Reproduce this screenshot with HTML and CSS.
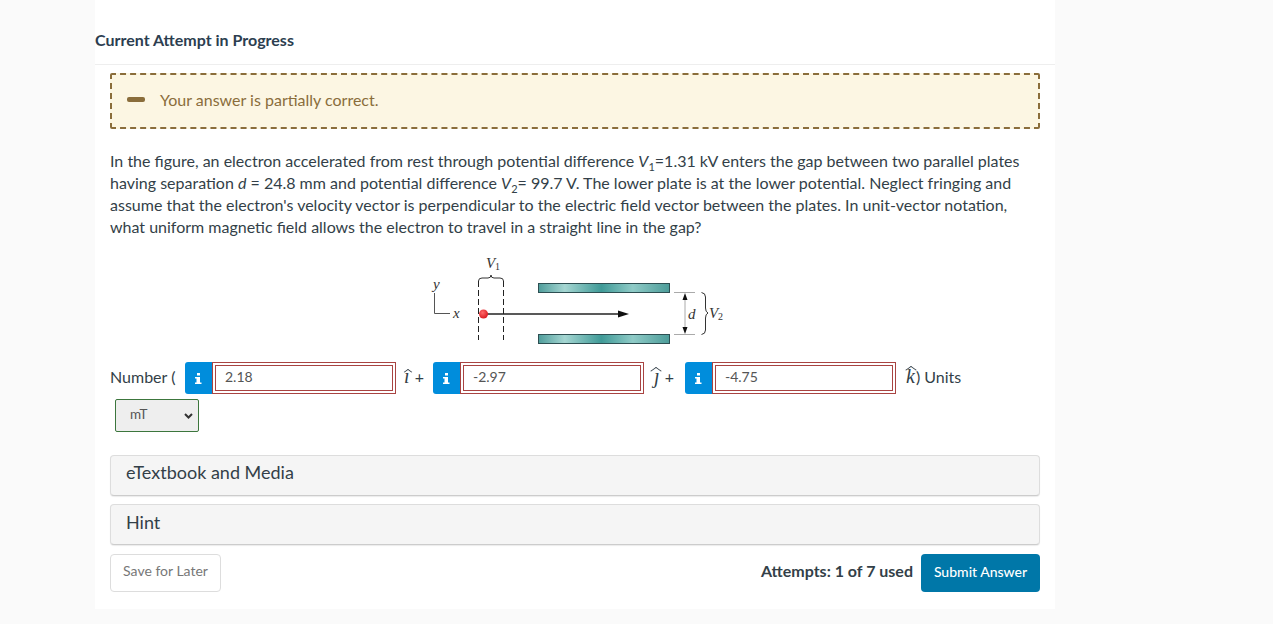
FILE: index.html
```html
<!DOCTYPE html>
<html lang="en">

<head>
	<meta charset="UTF-8">
	<meta name="viewport" content="width=device-width, initial-scale=1.0">
	<title>Current Attempt in Progress</title>
	<link rel="stylesheet" href="styles.css">
</head>

<body>
	<div class="card">
		<h1 class="title">Current Attempt in Progress</h1>
		<div class="content">
			<div class="banner">
				<span class="banner-icon"></span>
				<span>Your answer is partially correct.</span>
			</div>
			<p class="question">In the figure, an electron accelerated from rest through potential difference <i>V</i><sub>1</sub>=1.31 kV enters the gap between two parallel plates having separation <i>d</i> = 24.8 mm and potential difference <i>V</i><sub>2</sub>= 99.7 V. The lower plate is at the lower potential. Neglect fringing and assume that the electron's velocity vector is perpendicular to the electric field vector between the plates. In unit-vector notation, what uniform magnetic field allows the electron to travel in a straight line in the gap?</p>
			<svg class="figure" width="310" height="100" viewBox="0 0 310 100">
				<defs>
					<linearGradient id="plate" x1="0" x2="1" y1="0" y2="0">
						<stop offset="0" stop-color="#4f9d9b" />
						<stop offset="0.2" stop-color="#a5d6d2" />
						<stop offset="0.48" stop-color="#3f9a97" />
						<stop offset="0.72" stop-color="#8fcbc7" />
						<stop offset="1" stop-color="#4c9c99" />
					</linearGradient>
					<radialGradient id="dot" cx="0.4" cy="0.35" r="0.7">
						<stop offset="0" stop-color="#ff6a6a" />
						<stop offset="1" stop-color="#d8141c" />
					</radialGradient>
				</defs>
				<rect class="plate" x="118.5" y="33.5" width="131" height="9" />
				<rect class="plate" x="118.5" y="84.5" width="131" height="9" />
				<path class="axis" d="M14.5 43V63.5H30" />
				<path class="dash" d="M58.5 31V90M83.5 31V90" />
				<path class="thin" d="M58.5 31Q58.5 28 62 28H68Q71 28 71 25Q71 28 74 28H80Q83.5 28 83.5 31" />
				<path class="line" d="M63 64H200" />
				<path class="head" d="M198 60.5L209 64L198 67.5Z" />
				<circle cx="63.5" cy="64" r="4.5" fill="url(#dot)" />
				<path class="grey" d="M254 42.5H275M254 84.5H275" />
				<path class="grey" d="M265 46V81" />
				<path class="head" d="M265 43L262.5 50H267.5ZM265 84L262.5 77H267.5Z" />
				<path class="thin" d="M281.5 42.5Q285.5 43 285.5 47V58Q285.5 62 288 63Q285.5 64 285.5 68V80Q285.5 84 281.5 84.5" />
				<text class="math" x="66" y="18">V</text>
				<text class="math-sub" x="75" y="20">1</text>
				<text class="math" x="13" y="39">y</text>
				<text class="math" x="33" y="68">x</text>
				<text class="math" x="268" y="69">d</text>
				<text class="math" x="289" y="68">V</text>
				<text class="math-sub" x="298" y="70">2</text>
			</svg>
			<div class="answer">
				<span class="label">Number (</span>
				<span class="info"><svg width="7" height="11" viewBox="0 0 7 11"><path d="M2 0H5V2.5H2ZM0 4H5V9.5H6.5V11H0V9.5H1.5V5.5H0Z" /></svg></span>
				<span class="field"><input class="field-input" type="text" value="2.18"></span>
				<span class="unit"><i class="hat hat-i">&#305;</i> +</span>
				<span class="info"><svg width="7" height="11" viewBox="0 0 7 11"><path d="M2 0H5V2.5H2ZM0 4H5V9.5H6.5V11H0V9.5H1.5V5.5H0Z" /></svg></span>
				<span class="field"><input class="field-input" type="text" value="-2.97"></span>
				<span class="unit unit-j"><i class="hat hat-j">&#567;</i> +</span>
				<span class="info"><svg width="7" height="11" viewBox="0 0 7 11"><path d="M2 0H5V2.5H2ZM0 4H5V9.5H6.5V11H0V9.5H1.5V5.5H0Z" /></svg></span>
				<span class="field"><input class="field-input" type="text" value="-4.75"></span>
				<span class="unit unit-last"><i class="hat hat-k">k</i>) Units</span>
			</div>
			<select class="units">
				<option>mT</option>
			</select>
			<div class="panel">eTextbook and Media</div>
			<div class="panel">Hint</div>
			<div class="actions">
				<button class="btn-save">Save for Later</button>
				<div class="actions-right">
					<span class="attempts">Attempts: 1 of 7 used</span>
					<button class="btn-submit">Submit Answer</button>
				</div>
			</div>
		</div>
	</div>
</body>

</html>
```

FILE: styles.css
```css
* {
	box-sizing: border-box;
}

body {
	margin: 0;
	background: #fafafa;
	font-family: Lato, "Liberation Sans", sans-serif;
	color: #333f48;
}

.card {
	width: 960px;
	height: 609px;
	margin-left: 95px;
	background: #fff;
}

.title {
	height: 65px;
	margin: 0;
	padding-top: 30px;
	font-size: 16px;
	line-height: 20px;
	font-weight: 700;
	color: #2c3e50;
	border-bottom: 1px solid #eee;
}

.content {
	padding: 8px 15px 0;
}

.banner {
	display: flex;
	align-items: center;
	height: 56px;
	padding: 0 0 4px 15px;
	background: #fcf6e3;
	border: 2px dashed #8a6d3b;
	border-radius: 2px;
	font-size: 16px;
	color: #8a6d3b;
}

.banner-icon {
	width: 18px;
	height: 5px;
	margin-right: 15px;
	background: #8a6d3b;
	border-radius: 2px;
}

.question {
	margin: 21px 0 0;
	font-size: 16px;
	line-height: 22px;
	color: #333f48;
}

.question sub {
	font-size: 11px;
	line-height: 0;
}

.figure {
	display: block;
	margin: 12px auto 0;
}

.plate {
	fill: url(#plate);
	stroke: #2d4f52;
	stroke-width: 1;
}

.thin {
	fill: none;
	stroke: #333;
	stroke-width: 1;
}

.axis {
	fill: none;
	stroke: #555;
	stroke-width: 1;
}

.dash {
	fill: none;
	stroke: #222;
	stroke-width: 1;
	stroke-dasharray: 6 3;
}

.line {
	stroke: #222;
	stroke-width: 1.5;
}

.grey {
	fill: none;
	stroke: #aaa;
	stroke-width: 1;
}

.head {
	fill: #111;
}

.math {
	font-family: "Liberation Serif", serif;
	font-style: italic;
	font-size: 15px;
	fill: #333;
}

.math-sub {
	font-family: "Liberation Serif", serif;
	font-size: 10px;
	fill: #333;
}

.answer {
	display: flex;
	align-items: center;
	height: 32px;
	margin-top: 12px;
	font-size: 16px;
}

.label {
	width: 75px;
	padding-bottom: 4px;
}

.info {
	display: flex;
	align-items: center;
	justify-content: center;
	width: 27px;
	height: 32px;
	background: #008ddc;
	border-radius: 3px 0 0 3px;
}

.info svg {
	fill: #fff;
}

.field {
	display: block;
	width: 184px;
	height: 32px;
	padding: 2px;
	border: 1px solid #a94442;
}

.field-input {
	display: block;
	width: 100%;
	height: 100%;
	padding: 0 9px 3px;
	border: 1px solid #a94442;
	outline: 0;
	font-family: Lato, sans-serif;
	font-size: 14px;
	color: #555;
}

.unit {
	width: 37px;
	padding-left: 8px;
	padding-bottom: 4px;
	white-space: nowrap;
}

.unit-j {
	width: 41px;
	padding-left: 10px;
}

.unit-last {
	width: auto;
	padding-left: 10px;
}

.hat {
	position: relative;
	display: inline-block;
	padding-right: 1px;
	font-family: "Liberation Serif", serif;
	font-size: 20px;
	line-height: 20px;
}

.hat::before {
	content: "";
	position: absolute;
	border-top: 1px solid #333f48;
	border-left: 1px solid #333f48;
	transform: scaleY(0.7) rotate(45deg);
}

.hat-i::before {
	left: 1px;
	top: 3px;
	width: 5px;
	height: 5px;
}

.hat-j::before {
	left: -2px;
	top: 1px;
	width: 7px;
	height: 7px;
}

.hat-k::before {
	left: 1px;
	top: 0;
	width: 7px;
	height: 7px;
}

.units {
	display: block;
	width: 84px;
	height: 33px;
	margin: 5px 0 0 5px;
	padding: 0 0 4px 14px;
	appearance: none;
	background: #eee url("data:image/svg+xml,%3Csvg xmlns='http://www.w3.org/2000/svg' width='9' height='6'%3E%3Cpath d='M1 1l3.5 3.5L8 1' fill='none' stroke='%23333' stroke-width='2'/%3E%3C/svg%3E") no-repeat 68px 13px;
	border: 1px solid #3c763d;
	border-radius: 2px;
	font-family: Lato, sans-serif;
	font-size: 13.5px;
	color: #555;
}

.panel {
	height: 41px;
	margin-top: 8px;
	padding-left: 15px;
	background: #f5f5f5;
	border: 1px solid #ddd;
	border-bottom-color: #ccc;
	border-radius: 4px;
	box-shadow: 0 1px 1px rgba(0, 0, 0, 0.08);
	font-size: 18px;
	line-height: 34px;
	color: #333f48;
}

.units + .panel {
	margin-top: 23px;
	line-height: 33px;
}

.actions {
	display: flex;
	justify-content: space-between;
	margin-top: 9px;
}

.actions-right {
	display: flex;
	align-items: center;
	gap: 8px;
}

.btn-save {
	width: 111px;
	height: 38px;
	padding: 0 0 6px;
	background: #fff;
	border: 1px solid #ddd;
	border-radius: 4px;
	font-family: Lato, sans-serif;
	font-size: 14px;
	color: #777;
}

.attempts {
	padding-bottom: 6px;
	font-size: 16px;
	font-weight: 700;
	color: #333f48;
}

.btn-submit {
	width: 119px;
	height: 38px;
	padding: 0 0 4px;
	background: #0077a8;
	border: 0;
	border-radius: 4px;
	font-family: Lato, sans-serif;
	font-size: 14px;
	font-weight: 500;
	color: #fff;
}
```
